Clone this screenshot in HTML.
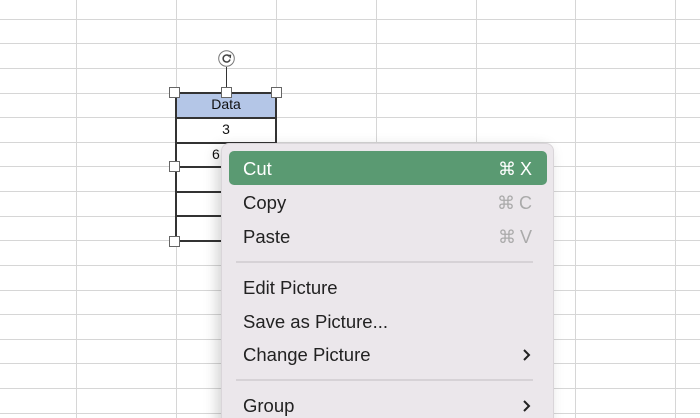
<!DOCTYPE html>
<html style="width:700px;height:418px;overflow:hidden"><head><style>
body{margin:0;width:700px;height:418px;overflow:hidden;background:#fff;position:relative;font-family:"Liberation Sans",sans-serif}
.v{position:absolute;top:0;height:418px;width:1px;background:#d6d6d6}
.h{position:absolute;left:0;width:700px;height:1px;background:#d6d6d6}
.b{position:absolute;background:#333}
.hd{position:absolute;background:#fff;border:1px solid #666;box-sizing:border-box;width:11px;height:11px}
.menu{position:absolute;left:221px;top:143px;width:333px;height:290px;background:#ebe7eb;border-radius:8px;box-shadow:-4px 4px 14px rgba(0,0,0,.18);border:1px solid #d9d5d9;box-sizing:border-box}
.it{position:absolute;left:21px;font-size:18.5px;color:#222;line-height:20px}
.sc{position:absolute;right:21px;font-size:18px;color:#aaa;line-height:20px;word-spacing:-1px}
.sep{position:absolute;left:14px;width:297px;height:2px;background:#d6d2d6}
.ar{position:absolute;right:22px;width:9px;height:14px}
</style></head><body>
<div class="v" style="left:76px"></div><div class="v" style="left:176px"></div><div class="v" style="left:276px"></div><div class="v" style="left:376px"></div><div class="v" style="left:476px"></div><div class="v" style="left:575px"></div><div class="v" style="left:675px"></div>
<div class="h" style="top:19px"></div><div class="h" style="top:43px"></div><div class="h" style="top:68px"></div><div class="h" style="top:93px"></div><div class="h" style="top:117px"></div><div class="h" style="top:142px"></div><div class="h" style="top:166px"></div><div class="h" style="top:191px"></div><div class="h" style="top:216px"></div><div class="h" style="top:240px"></div><div class="h" style="top:265px"></div><div class="h" style="top:290px"></div><div class="h" style="top:314px"></div><div class="h" style="top:339px"></div><div class="h" style="top:363px"></div><div class="h" style="top:388px"></div><div class="h" style="top:413px"></div>
<div style="position:absolute;left:176px;top:93px;width:100px;height:25px;background:#b4c6e7"></div>
<div style="position:absolute;left:176px;top:118px;width:100px;height:24px;background:#fff"></div>
<div style="position:absolute;left:176px;top:143px;width:100px;height:98px;background:#fff"></div>
<div style="position:absolute;left:176px;top:96px;width:100px;text-align:center;font-size:14px;color:#111">Data</div>
<div style="position:absolute;left:176px;top:121px;width:100px;text-align:center;font-size:14px;color:#111">3</div>
<div style="position:absolute;left:212px;top:146px;font-size:14px;color:#111">6</div>
<div class="b" style="left:175px;top:92px;width:102px;height:2px"></div>
<div class="b" style="left:175px;top:117px;width:101px;height:2px"></div>
<div class="b" style="left:175px;top:142px;width:101px;height:2px"></div>
<div class="b" style="left:175px;top:166px;width:101px;height:2px"></div>
<div class="b" style="left:175px;top:191px;width:101px;height:2px"></div>
<div class="b" style="left:175px;top:215px;width:101px;height:2px"></div>
<div class="b" style="left:175px;top:240px;width:101px;height:2px"></div>
<div class="b" style="left:175px;top:92px;width:2px;height:150px"></div>
<div class="b" style="left:275px;top:92px;width:2px;height:150px"></div>
<div class="b" style="left:226px;top:67px;width:1px;height:25px"></div>
<svg style="position:absolute;left:218px;top:50px" width="17" height="17" viewBox="0 0 17 17"><circle cx="8.5" cy="8.5" r="7.8" fill="#fff" stroke="#777"/><path d="M11.5 6.5 A3.5 3.5 0 1 0 12 9.5" fill="none" stroke="#444" stroke-width="1.5"/><path d="M9.5 5.5 L12.5 5.3 L12.2 8.2" fill="none" stroke="#444" stroke-width="1.3"/></svg>
<div class="hd" style="left:169px;top:87px"></div><div class="hd" style="left:221px;top:87px"></div><div class="hd" style="left:271px;top:87px"></div>
<div class="hd" style="left:169px;top:161px"></div><div class="hd" style="left:169px;top:236px"></div>
<div class="menu">
<div style="position:absolute;left:7px;top:7px;width:318px;height:34px;background:#5a9a72;border-radius:5px"></div>
<div class="it" style="top:15px;color:#fff">Cut</div><div class="sc" style="top:15px;color:#fff">⌘ X</div>
<div class="it" style="top:49px">Copy</div><div class="sc" style="top:49px">⌘ C</div>
<div class="it" style="top:83px">Paste</div><div class="sc" style="top:83px">⌘ V</div>
<div class="sep" style="top:117px"></div>
<div class="it" style="top:134px">Edit Picture</div>
<div class="it" style="top:168px">Save as Picture...</div>
<div class="it" style="top:201px">Change Picture</div>
<svg class="ar" style="top:204px" viewBox="0 0 9 14"><path d="M2 2 L7 7 L2 12" fill="none" stroke="#222" stroke-width="2"/></svg>
<div class="sep" style="top:235px"></div>
<div class="it" style="top:252px">Group</div>
<svg class="ar" style="top:255px" viewBox="0 0 9 14"><path d="M2 2 L7 7 L2 12" fill="none" stroke="#222" stroke-width="2"/></svg>
</div>
</body></html>
